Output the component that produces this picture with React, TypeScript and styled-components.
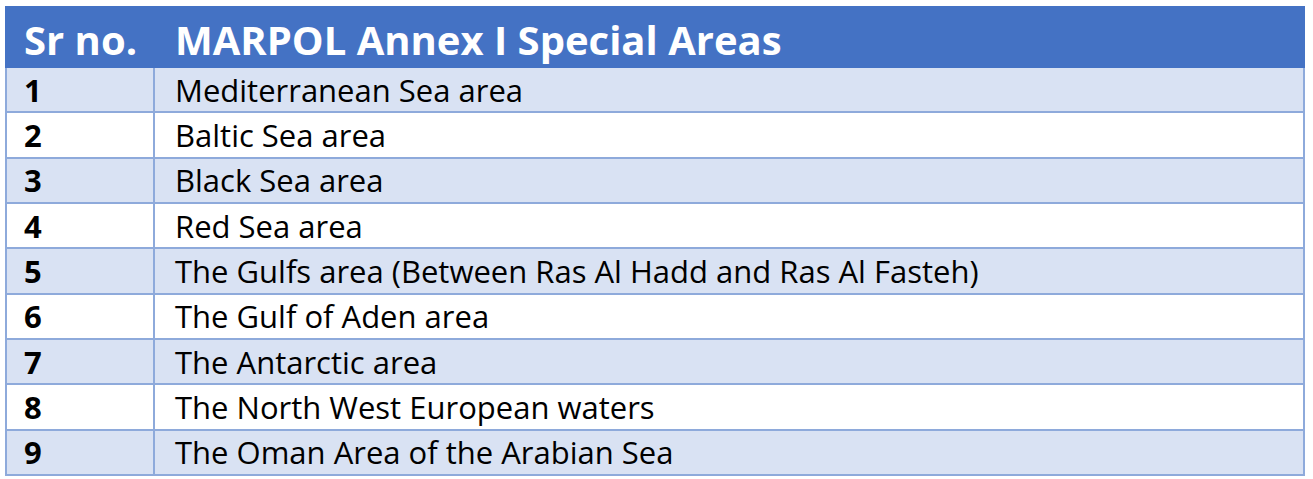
import React from "react";
import styled, { createGlobalStyle } from "styled-components";

const areas: string[] = [
  "Mediterranean Sea area",
  "Baltic Sea area",
  "Black Sea area",
  "Red Sea area",
  "The Gulfs area (Between Ras Al Hadd and Ras Al Fasteh)",
  "The Gulf of Aden area",
  "The Antarctic area",
  "The North West European waters",
  "The Oman Area of the Arabian Sea",
];

const GlobalStyle = createGlobalStyle`
  html, body {
    margin: 0;
    padding: 0;
    background: #fff;
  }
  body {
    font-family: "Open Sans", Lato, "Liberation Sans", sans-serif;
  }
`;

const Table = styled.div`
  width: 1300px;
  margin: 6px 0 0 5px;
  display: flex;
  flex-direction: column;
`;

const HeadRow = styled.div`
  display: grid;
  grid-template-columns: 150px 1fr;
  height: 62px;
  background: #4472c4;
  color: #fff;
  font-weight: 700;
  font-size: 40px;
  align-items: center;
  padding-top: 4px;
  box-sizing: border-box;
`;

const HeadCell = styled.div<{ $first?: boolean }>`
  padding-left: ${(p) => (p.$first ? "19px" : "20px")};
  white-space: nowrap;
`;

const Row = styled.div<{ $band: boolean }>`
  display: grid;
  grid-template-columns: 148px 1fr;
  height: 45.33px;
  box-sizing: border-box;
  background: ${(p) => (p.$band ? "#d9e2f3" : "#fff")};
  border: 2px solid #8eaadb;
  border-top: 0;
  color: #000;
  font-size: 31px;
`;

const NumCell = styled.div`
  display: flex;
  align-items: center;
  padding-left: 17px;
  font-weight: 700;
  border-right: 2px solid #8eaadb;
`;

const TextCell = styled.div`
  display: flex;
  align-items: center;
  padding-left: 20px;
  white-space: nowrap;
`;

export default function App() {
  return (
    <>
      <GlobalStyle />
      <Table>
        <HeadRow>
          <HeadCell $first>Sr no.</HeadCell>
          <HeadCell>MARPOL Annex I Special Areas</HeadCell>
        </HeadRow>
        {areas.map((area, i) => (
          <Row key={area} $band={i % 2 === 0}>
            <NumCell>{i + 1}</NumCell>
            <TextCell>{area}</TextCell>
          </Row>
        ))}
      </Table>
    </>
  );
}
